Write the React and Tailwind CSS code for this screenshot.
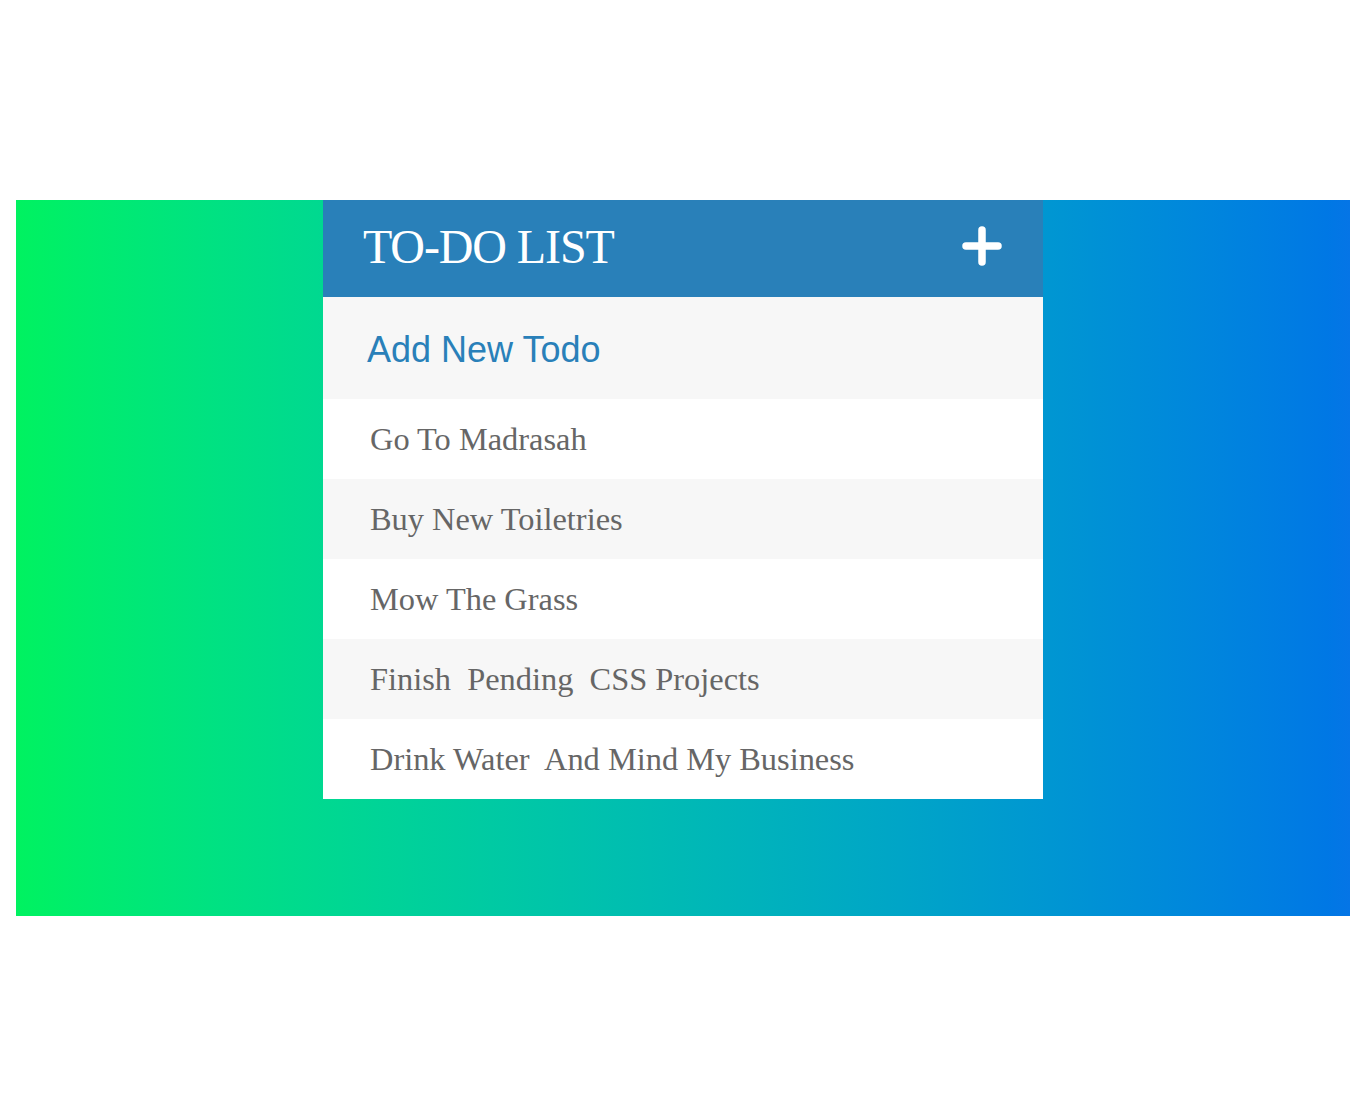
import React from 'react';

const todos = [
  'Go To Madrasah',
  'Buy New Toiletries',
  'Mow The Grass',
  'Finish  Pending  CSS Projects',
  'Drink Water  And Mind My Business',
];

function PlusIcon() {
  return (
    <svg width="40" height="40" viewBox="0 0 40 40" className="mb-[6px]">
      <path d="M20 4v32M4 20h32" stroke="#fff" strokeWidth="7.5" strokeLinecap="round" fill="none" />
    </svg>
  );
}

export default function App() {
  return (
    <div className="min-h-[1116px] bg-white px-4 py-[200px]">
      <div className="h-[716px] bg-gradient-to-r from-[#00f260] to-[#0575e6] flex justify-center">
        <div className="w-[720px] h-fit bg-white">
          {/* header */}
          <div className="h-[97px] bg-[#2980b9] flex items-center justify-between pl-10 pr-[41px]">
            <h1 className="text-[48px] leading-none tracking-[-1.1px] text-white font-['Liberation_Serif','Times_New_Roman',serif] pb-[3px]">
              TO-DO LIST
            </h1>
            <PlusIcon />
          </div>

          <div className="h-[102px] bg-[#f7f7f7] flex items-center pl-[44px] pt-1">
            <span className="text-[36px] text-[#2980b9] font-['Liberation_Sans',Arial,sans-serif]">
              Add New Todo
            </span>
          </div>

          <ul>
            {todos.map((todo, i) => (
              <li
                key={todo}
                className={
                  'h-20 flex items-center pl-[47px] whitespace-pre text-[32.4px] text-[#666] font-[\'Liberation_Serif\',\'Times_New_Roman\',serif] ' +
                  (i % 2 === 1 ? 'bg-[#f7f7f7]' : 'bg-white')
                }
              >
                {todo}
              </li>
            ))}
          </ul>
        </div>
      </div>
    </div>
  );
}
